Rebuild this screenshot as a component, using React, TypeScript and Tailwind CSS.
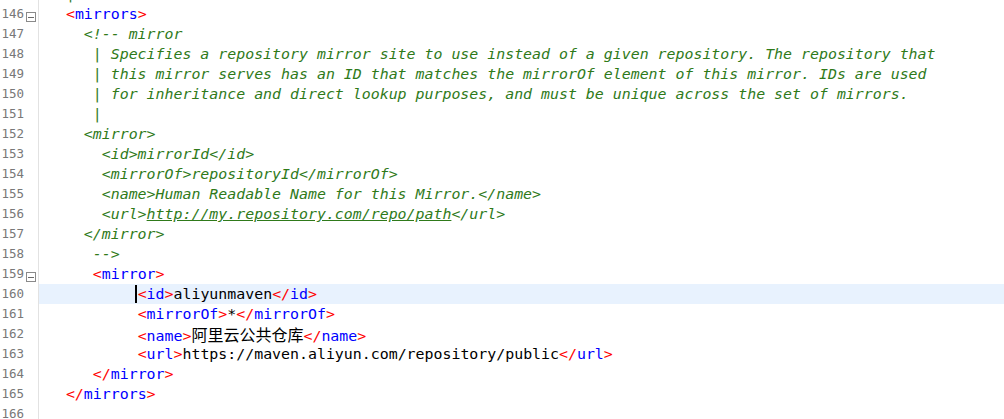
import React from "react";

type Seg = { t: string; c: "r" | "b" | "k" | "g" | "u" | "cn" | "caret" };

const mono = { fontFamily: '"DejaVu Sans Mono", "Noto Sans CJK SC", monospace' };

const open = (name: string): Seg[] => [
  { t: "<", c: "r" },
  { t: name, c: "b" },
  { t: ">", c: "r" },
];
const close = (name: string): Seg[] => [
  { t: "</", c: "r" },
  { t: name, c: "b" },
  { t: ">", c: "r" },
];
const sp = (n: number): Seg => ({ t: " ".repeat(n), c: "k" });
const g = (t: string): Seg => ({ t, c: "g" });

const lines: { n: number; segs: Seg[]; fold?: boolean; current?: boolean }[] = [
  { n: 145, segs: [g("   |-->")] },
  { n: 146, segs: [sp(3), ...open("mirrors")], fold: true },
  { n: 147, segs: [g("     <!-- mirror")] },
  {
    n: 148,
    segs: [g("      | Specifies a repository mirror site to use instead of a given repository. The repository that")],
  },
  {
    n: 149,
    segs: [g("      | this mirror serves has an ID that matches the mirrorOf element of this mirror. IDs are used")],
  },
  {
    n: 150,
    segs: [g("      | for inheritance and direct lookup purposes, and must be unique across the set of mirrors.")],
  },
  { n: 151, segs: [g("      |")] },
  { n: 152, segs: [g("     <mirror>")] },
  { n: 153, segs: [g("       <id>mirrorId</id>")] },
  { n: 154, segs: [g("       <mirrorOf>repositoryId</mirrorOf>")] },
  { n: 155, segs: [g("       <name>Human Readable Name for this Mirror.</name>")] },
  { n: 156, segs: [g("       <url>"), { t: "http://my.repository.com/repo/path", c: "u" }, g("</url>")] },
  { n: 157, segs: [g("     </mirror>")] },
  { n: 158, segs: [g("      -->")] },
  { n: 159, segs: [sp(6), ...open("mirror")], fold: true },
  {
    n: 160,
    segs: [sp(11), { t: "", c: "caret" }, ...open("id"), { t: "aliyunmaven", c: "k" }, ...close("id")],
    current: true,
  },
  { n: 161, segs: [sp(11), ...open("mirrorOf"), { t: "*", c: "k" }, ...close("mirrorOf")] },
  { n: 162, segs: [sp(11), ...open("name"), { t: "阿里云公共仓库", c: "cn" }, ...close("name")] },
  {
    n: 163,
    segs: [sp(11), ...open("url"), { t: "https://maven.aliyun.com/repository/public", c: "k" }, ...close("url")],
  },
  { n: 164, segs: [sp(6), ...close("mirror")] },
  { n: 165, segs: [sp(3), ...close("mirrors")] },
  { n: 166, segs: [] },
];

const Segment: React.FC<{ s: Seg }> = ({ s }) => {
  switch (s.c) {
    case "r":
      return <span className="text-[#ff0000]">{s.t}</span>;
    case "b":
      return <span className="text-[#0000ff]">{s.t}</span>;
    case "k":
      return <span className="text-black">{s.t}</span>;
    case "g":
      return <span className="italic text-[#2f7a1a]">{s.t}</span>;
    case "u":
      return <span className="italic text-[#2f7a1a] underline decoration-[#2f7a1a]">{s.t}</span>;
    case "cn":
      return (
        <span className="text-black text-[16px]" style={{ fontFamily: '"Noto Sans CJK SC", sans-serif' }}>
          {s.t}
        </span>
      );
    case "caret":
      return (
        <span className="relative inline-block w-0 h-5 align-top">
          <span className="absolute left-[-3px] top-[1px] w-[2px] h-[18px] bg-black" />
        </span>
      );
  }
};

const App: React.FC = () => {
  return (
    <div className="w-[1004px] h-[419px] overflow-hidden bg-white">
      <div className="flex -mt-4">
        <div className="w-[39px] shrink-0 border-r border-[#e2e2e2] bg-white">
          {lines.map((l) => (
            <div key={l.n} className="flex h-5">
              <div className="w-[24px] text-right text-[12.5px] leading-5 text-[#787878]" style={mono}>
                {l.n}
              </div>
              <div className="w-[14px] pl-[2px]">
                {l.fold && (
                  <div className="mt-[8px] w-[10px] h-[10px] border border-[#8a8a8a] flex items-center justify-center bg-white">
                    <div className="w-[6px] h-px bg-[#6a6a6a]" />
                  </div>
                )}
              </div>
            </div>
          ))}
        </div>
        <div className="flex-1 text-[14.9px] leading-5" style={mono}>
          {lines.map((l) => (
            <div key={l.n} className={`h-5 whitespace-pre ${l.current ? "bg-[#e8f2fe]" : ""}`}>
              {l.segs.map((s, i) => (
                <Segment key={i} s={s} />
              ))}
            </div>
          ))}
        </div>
      </div>
    </div>
  );
};

export default App;
